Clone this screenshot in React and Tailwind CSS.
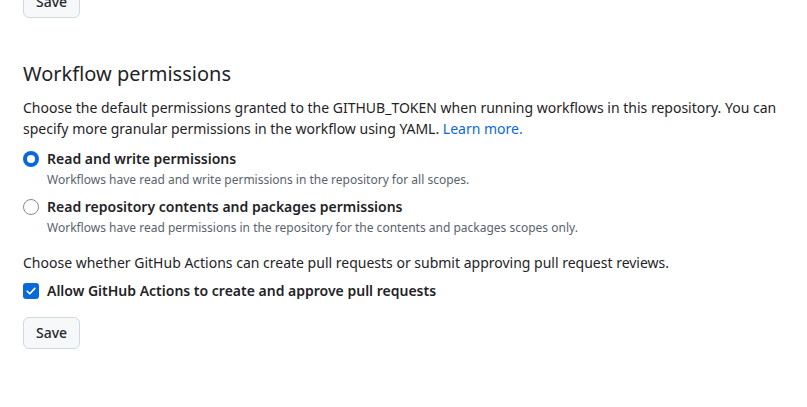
import React, { useState } from "react";

const font = { fontFamily: '"Noto Sans", "Liberation Sans", sans-serif' };

const SaveButton = () => (
  <button className="h-8 px-3 text-sm font-medium text-[#25292e] bg-[#f6f8fa] border border-[#d1d9e0] rounded-md leading-5">
    Save
  </button>
);

const Radio = ({ checked, onClick, label, note }) => (
  <div className="flex items-start gap-2 cursor-pointer" onClick={onClick}>
    <div className="pt-[3px]">
      {checked ? (
        <div className="w-4 h-4 rounded-full bg-[#0969da] flex items-center justify-center">
          <div className="w-2 h-2 rounded-full bg-white"></div>
        </div>
      ) : (
        <div className="w-4 h-4 rounded-full border border-[#818b98] bg-white"></div>
      )}
    </div>
    <div>
      <div className="text-sm font-semibold leading-[21px] text-[#1f2328]">{label}</div>
      <div className="text-xs leading-[18px] text-[#59636e] mt-[2px]">{note}</div>
    </div>
  </div>
);

export default function App() {
  const [perm, setPerm] = useState("write");
  const [allow, setAllow] = useState(true);

  return (
    <div className="w-[807px] h-[407px] bg-white overflow-hidden text-[#1f2328]" style={font}>
      <div className="px-[23px] -mt-[14px]">
        <SaveButton />

        {/* Workflow permissions */}
        <h2 className="text-xl font-normal leading-[30px] mt-[41px]">Workflow permissions</h2>
        <p className="text-sm leading-[21px] mt-2">
          Choose the default permissions granted to the GITHUB_TOKEN when running workflows in this repository. You can
          specify more granular permissions in the workflow using YAML.{" "}
          <a href="#" className="text-[#0969da]">Learn more.</a>
        </p>

        <div className="mt-[9px] flex flex-col gap-[7px]">
          <Radio
            checked={perm === "write"}
            onClick={() => setPerm("write")}
            label="Read and write permissions"
            note="Workflows have read and write permissions in the repository for all scopes."
          />
          <Radio
            checked={perm === "read"}
            onClick={() => setPerm("read")}
            label="Read repository contents and packages permissions"
            note="Workflows have read permissions in the repository for the contents and packages scopes only."
          />
        </div>

        <p className="text-sm leading-[21px] mt-[15px]">
          Choose whether GitHub Actions can create pull requests or submit approving pull request reviews.
        </p>

        <label className="mt-[7px] flex items-center gap-2 cursor-pointer" onClick={() => setAllow(!allow)}>
          {allow ? (
            <div className="w-4 h-4 rounded-[3px] bg-[#0969da] flex items-center justify-center">
              <svg width="12" height="12" viewBox="0 0 12 12" fill="none">
                <path d="M2.2 6.2 4.8 8.8 9.8 3.4" stroke="white" strokeWidth="1.6" strokeLinecap="round" strokeLinejoin="round" />
              </svg>
            </div>
          ) : (
            <div className="w-4 h-4 rounded-[3px] border border-[#818b98] bg-white"></div>
          )}
          <span className="text-sm font-semibold leading-[21px]">Allow GitHub Actions to create and approve pull requests</span>
        </label>

        <div className="mt-[16px]">
          <SaveButton />
        </div>
      </div>
    </div>
  );
}
